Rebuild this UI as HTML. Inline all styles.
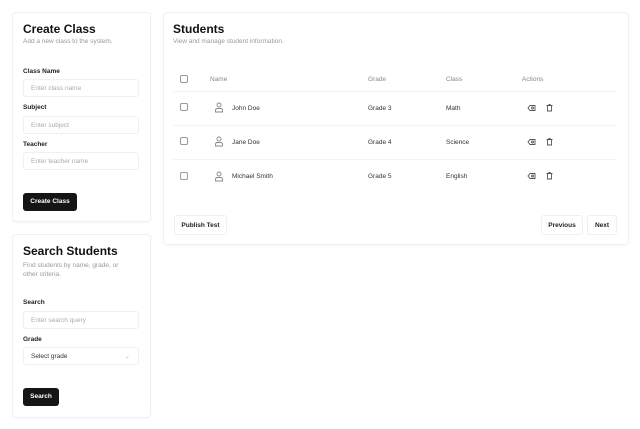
<!DOCTYPE html>
<html><head><style>
*{box-sizing:border-box;margin:0;padding:0}
body{width:640px;height:429px;background:#fff;font-family:"Liberation Sans",sans-serif;position:relative;overflow:hidden;color:#111}
.card{position:absolute;border:1px solid #f0f0f0;border-radius:4px;background:#fff;box-shadow:0 1px 2px rgba(0,0,0,0.03)}
.a{position:absolute;white-space:nowrap}
h2{position:absolute;font-size:12px;font-weight:bold;color:#111}
.sub{font-size:6.5px;color:#999}
.lbl{font-size:6.5px;font-weight:bold;color:#222}
.inp{position:absolute;height:18px;border:1px solid #f0f0f0;border-radius:3px;font-size:6.5px;color:#aaa;padding:5px 0 0 7px}
.btn{position:absolute;background:#151515;color:#fff;font-size:6.5px;font-weight:bold;border-radius:3px;text-align:center}
.obtn{position:absolute;border:1px solid #f0f0f0;border-radius:3px;font-size:6.5px;font-weight:bold;color:#222;text-align:center;height:20px;line-height:19px}
.th{font-size:6.5px;color:#888}
.td{font-size:6.5px;color:#333}
.cb{position:absolute;width:8px;height:8px;border:1px solid #999;border-radius:2px}
.line{position:absolute;left:173px;width:443px;height:1px;background:#f3f3f3}
</style></head><body>
<div class="card" style="left:12px;top:12px;width:139px;height:210px"></div>
<h2 style="left:23px;top:22px">Create Class</h2>
<div class="a sub" style="left:23px;top:38px">Add a new class to the system.</div>
<div class="a lbl" style="left:23px;top:68px">Class Name</div>
<div class="inp" style="left:23px;top:79px;width:116px">Enter class name</div>
<div class="a lbl" style="left:23px;top:104px">Subject</div>
<div class="inp" style="left:23px;top:116px;width:116px">Enter subject</div>
<div class="a lbl" style="left:23px;top:141px">Teacher</div>
<div class="inp" style="left:23px;top:152px;width:116px">Enter teacher name</div>
<div class="btn" style="left:23px;top:193px;width:54px;height:18px;line-height:18px">Create Class</div>

<div class="card" style="left:12px;top:234px;width:139px;height:184px"></div>
<h2 style="left:23px;top:244px">Search Students</h2>
<div class="a sub" style="left:23px;top:261px;line-height:9px">Find students by name, grade, or<br>other criteria.</div>
<div class="a lbl" style="left:23px;top:299px">Search</div>
<div class="inp" style="left:23px;top:311px;width:116px">Enter search query</div>
<div class="a lbl" style="left:23px;top:336px">Grade</div>
<div class="inp" style="left:23px;top:347px;width:116px;color:#333">Select grade<span style="position:absolute;right:8px;top:4px;color:#bbb">⌄</span></div>
<div class="btn" style="left:23px;top:388px;width:36px;height:18px;line-height:18px">Search</div>

<div class="card" style="left:163px;top:12px;width:466px;height:233px"></div>
<h2 style="left:173px;top:22px">Students</h2>
<div class="a sub" style="left:173px;top:38px">View and manage student information.</div>
<div class="cb" style="left:180px;top:75px"></div>
<div class="a th" style="left:210px;top:76px">Name</div>
<div class="a th" style="left:368px;top:76px">Grade</div>
<div class="a th" style="left:446px;top:76px">Class</div>
<div class="a th" style="left:522px;top:76px">Actions</div>
<div class="line" style="top:91px"></div>
<div class="line" style="top:125px"></div>
<div class="line" style="top:159px"></div>

<div class="cb" style="left:180px;top:103px"></div>
<div class="cb" style="left:180px;top:137px"></div>
<div class="cb" style="left:180px;top:172px"></div>

<svg class="a" style="left:214px;top:102px" width="10" height="11" viewBox="0 0 10 11" fill="none" stroke="#888" stroke-width="0.9"><circle cx="5" cy="3" r="2"/><path d="M1.5 10V8.5Q1.5 6.5 3.5 6.5H6.5Q8.5 6.5 8.5 8.5V10Z"/></svg>
<svg class="a" style="left:214px;top:136px" width="10" height="11" viewBox="0 0 10 11" fill="none" stroke="#888" stroke-width="0.9"><circle cx="5" cy="3" r="2"/><path d="M1.5 10V8.5Q1.5 6.5 3.5 6.5H6.5Q8.5 6.5 8.5 8.5V10Z"/></svg>
<svg class="a" style="left:214px;top:171px" width="10" height="11" viewBox="0 0 10 11" fill="none" stroke="#888" stroke-width="0.9"><circle cx="5" cy="3" r="2"/><path d="M1.5 10V8.5Q1.5 6.5 3.5 6.5H6.5Q8.5 6.5 8.5 8.5V10Z"/></svg>

<div class="a td" style="left:232px;top:105px">John Doe</div>
<div class="a td" style="left:232px;top:139px">Jane Doe</div>
<div class="a td" style="left:232px;top:173px">Michael Smith</div>
<div class="a td" style="left:368px;top:105px">Grade 3</div>
<div class="a td" style="left:368px;top:139px">Grade 4</div>
<div class="a td" style="left:368px;top:173px">Grade 5</div>
<div class="a td" style="left:446px;top:105px">Math</div>
<div class="a td" style="left:446px;top:139px">Science</div>
<div class="a td" style="left:446px;top:173px">English</div>

<svg class="a" style="left:527px;top:104px" width="30" height="8" viewBox="0 0 30 8" fill="none" stroke="#555" stroke-width="0.9"><path d="M1 4L3 1.5H8V6.5H3Z"/><circle cx="5.5" cy="4" r="1"/><path d="M19.5 1.5H25.5M20.5 1.5V7H24.5V1.5M21.5 0.5H23.5"/></svg>
<svg class="a" style="left:527px;top:138px" width="30" height="8" viewBox="0 0 30 8" fill="none" stroke="#555" stroke-width="0.9"><path d="M1 4L3 1.5H8V6.5H3Z"/><circle cx="5.5" cy="4" r="1"/><path d="M19.5 1.5H25.5M20.5 1.5V7H24.5V1.5M21.5 0.5H23.5"/></svg>
<svg class="a" style="left:527px;top:172px" width="30" height="8" viewBox="0 0 30 8" fill="none" stroke="#555" stroke-width="0.9"><path d="M1 4L3 1.5H8V6.5H3Z"/><circle cx="5.5" cy="4" r="1"/><path d="M19.5 1.5H25.5M20.5 1.5V7H24.5V1.5M21.5 0.5H23.5"/></svg>

<div class="obtn" style="left:174px;top:215px;width:53px">Publish Test</div>
<div class="obtn" style="left:541px;top:215px;width:42px">Previous</div>
<div class="obtn" style="left:587px;top:215px;width:30px">Next</div>
</body></html>
